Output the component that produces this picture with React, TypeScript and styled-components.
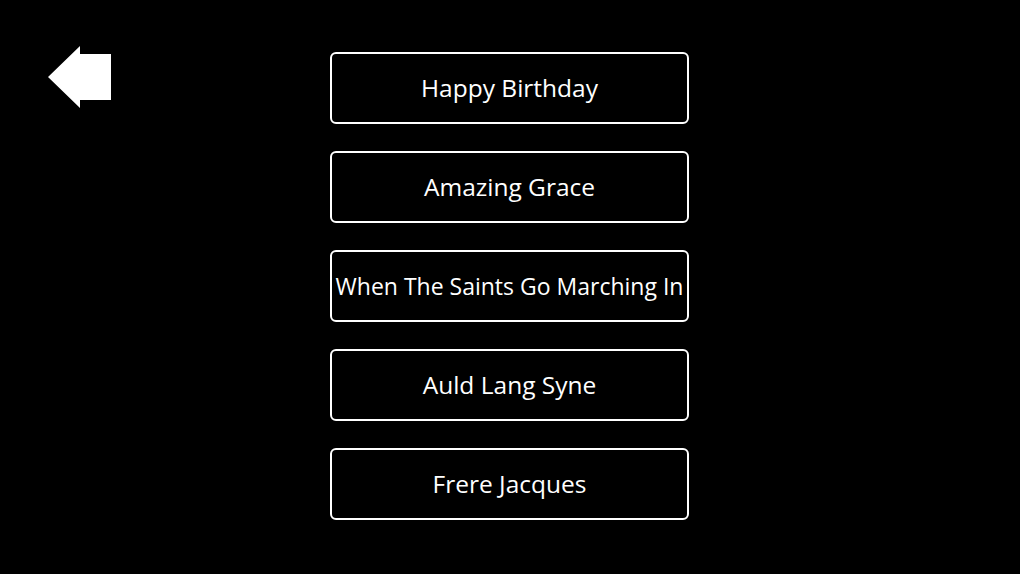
import React from 'react';
import styled, { createGlobalStyle } from 'styled-components';

const GlobalStyle = createGlobalStyle`
  html, body {
    margin: 0;
    padding: 0;
    background: #000;
    height: 100%;
  }
  #root {
    min-height: 100%;
  }
`;

const Screen = styled.div`
  width: 1020px;
  height: 574px;
  background: #000;
  display: grid;
  grid-template-columns: 330px 359px 1fr;
  box-sizing: border-box;
  padding-top: 46px;
  font-family: "Open Sans", "Liberation Sans", sans-serif;
`;

const BackButton = styled.button`
  justify-self: start;
  align-self: start;
  margin-left: 48px;
  padding: 0;
  border: none;
  background: none;
  cursor: pointer;
  width: 63px;
  height: 62px;
  display: flex;

  svg {
    display: block;
  }
`;

const SongList = styled.div`
  display: flex;
  flex-direction: column;
  gap: 27px;
  padding-top: 6px;
`;

const SongButton = styled.button<{ $compact?: boolean }>`
  box-sizing: border-box;
  width: 359px;
  height: 72px;
  border: 2px solid #fff;
  border-radius: 6px;
  background: #000;
  color: #fff;
  font-family: inherit;
  font-size: ${(p) => (p.$compact ? '23px' : '24.5px')};
  padding: 0 0 1px;
  white-space: nowrap;
  display: flex;
  align-items: center;
  justify-content: center;
  cursor: pointer;
`;

const songs = [
  'Happy Birthday',
  'Amazing Grace',
  'When The Saints Go Marching In',
  'Auld Lang Syne',
  'Frere Jacques',
];

const App: React.FC = () => {
  return (
    <>
      <GlobalStyle />
      <Screen>
        <BackButton aria-label="Back">
          <svg width="63" height="62" viewBox="0 0 63 62">
            <polygon points="0,31 32,0 32,8 63,8 63,54 32,54 32,62" fill="#fff" />
          </svg>
        </BackButton>
        <SongList>
          {songs.map((song) => (
            <SongButton key={song} $compact={song.length > 20}>
              {song}
            </SongButton>
          ))}
        </SongList>
      </Screen>
    </>
  );
};

export default App;
